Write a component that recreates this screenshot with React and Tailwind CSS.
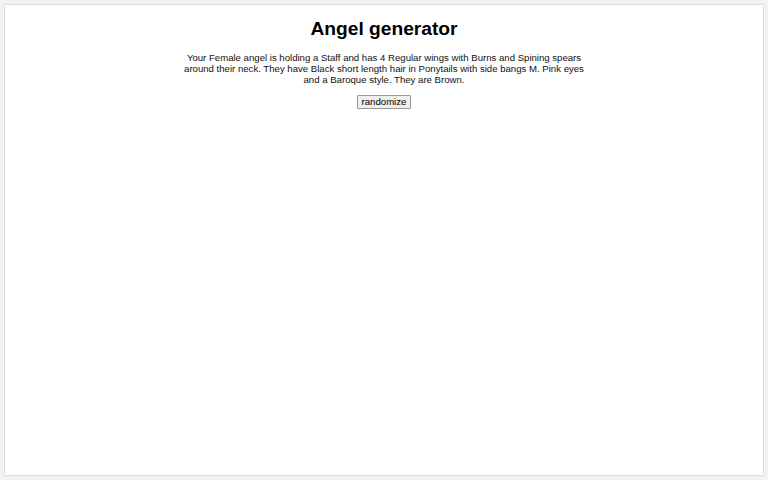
import { useState } from 'react';

const options = {
  gender: ['Female', 'Male'],
  weapon: ['Staff', 'Sword', 'Bow'],
  wingCount: ['2', '4', '6'],
  wingType: ['Regular', 'Feathered'],
  marks: ['Burns', 'Scars'],
  neck: ['Spining spears', 'Halos'],
  hairColor: ['Black', 'White', 'Gold'],
  hairLength: ['short length', 'long'],
  hairStyle: ['Ponytails with side bangs M.', 'Braids'],
  eyes: ['Pink', 'Blue'],
  style: ['Baroque', 'Gothic'],
  skin: ['Brown', 'Pale'],
};

const start = {
  gender: 'Female',
  weapon: 'Staff',
  wingCount: '4',
  wingType: 'Regular',
  marks: 'Burns',
  neck: 'Spining spears',
  hairColor: 'Black',
  hairLength: 'short length',
  hairStyle: 'Ponytails with side bangs M.',
  eyes: 'Pink',
  style: 'Baroque',
  skin: 'Brown',
};

const pick = (list) => list[Math.floor(Math.random() * list.length)];

export default function App() {
  const [a, setA] = useState(start);

  const randomize = () => {
    const next = {};
    Object.keys(options).forEach((k) => (next[k] = pick(options[k])));
    setA(next);
  };

  return (
    <div className="h-[480px] bg-[#f2f2f2] p-[4px] font-['Liberation_Sans',Arial,sans-serif] text-black">
      <div className="h-full bg-white border border-[#dcdcdc] flex flex-col items-center">
        <h1 className="mt-[12px] text-[19.2px] leading-[23px] font-bold">Angel generator</h1>
        <p className="mt-[12px] w-[404px] text-center text-[9.6px] leading-[11px] text-[#111]">
          Your {a.gender} angel is holding a {a.weapon} and has {a.wingCount} {a.wingType} wings with {a.marks} and {a.neck} around their neck. They have {a.hairColor} {a.hairLength} hair in {a.hairStyle} {a.eyes} eyes and a {a.style} style. They are {a.skin}.
        </p>
        <button
          onClick={randomize}
          className="mt-[10px] px-[4px] h-[14px] text-[9.6px] leading-[12px] bg-[#efefef] border border-[#9a9a9a] rounded-[1px]"
        >
          randomize
        </button>
      </div>
    </div>
  );
}
